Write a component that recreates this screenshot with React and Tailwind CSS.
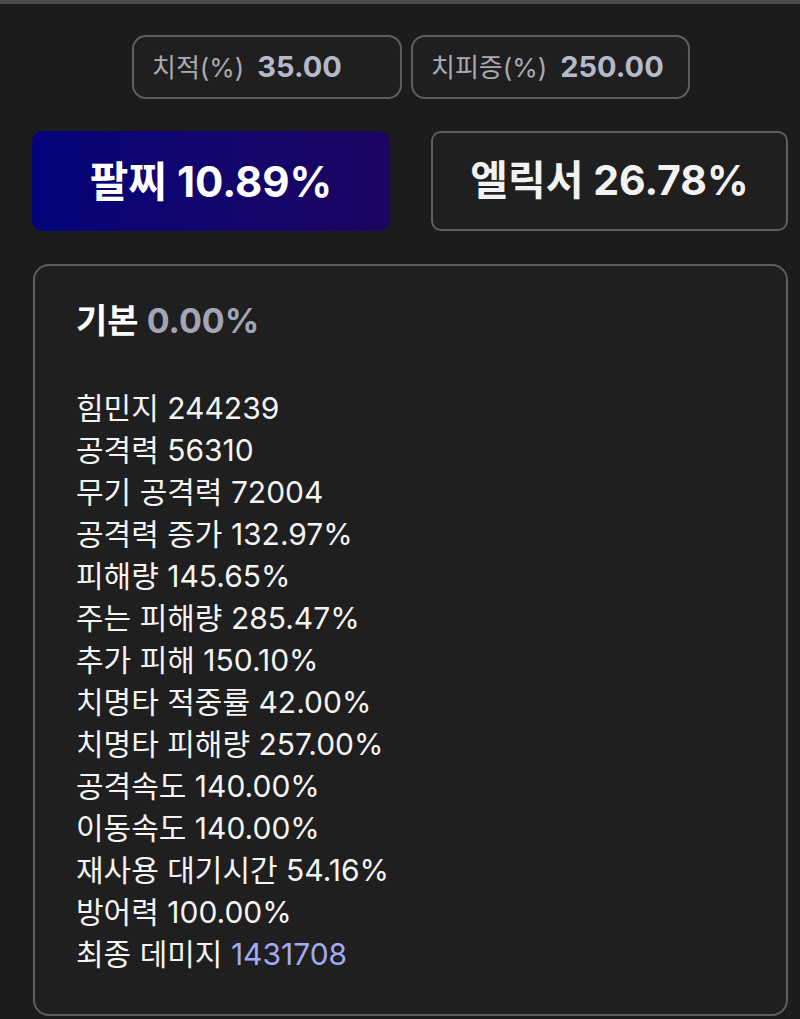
import React from "react"

const font = { fontFamily: 'Inter, "Noto Sans CJK KR", sans-serif' }

const stats = [
  ["힘민지", "244239"],
  ["공격력", "56310"],
  ["무기 공격력", "72004"],
  ["공격력 증가", "132.97%"],
  ["피해량", "145.65%"],
  ["주는 피해량", "285.47%"],
  ["추가 피해", "150.10%"],
  ["치명타 적중률", "42.00%"],
  ["치명타 피해량", "257.00%"],
  ["공격속도", "140.00%"],
  ["이동속도", "140.00%"],
  ["재사용 대기시간", "54.16%"],
  ["방어력", "100.00%"],
]

function InputBox({ label, value, width }) {
  return (
    <div
      className={`flex h-[64px] items-center gap-[13px] rounded-[14px] border-[2.5px] border-[#5e5e60] bg-[#1f1f1f] pl-[18px] ${width}`}
    >
      <span className="text-[26px] text-[#a9aab0]">{label}</span>
      <span className="text-[29px] font-bold text-[#b6b9c9]">{value}</span>
    </div>
  )
}

export default function App() {
  return (
    <div style={font} className="flex h-[1019px] w-[800px] flex-col overflow-hidden bg-[#1c1c1e] text-white">
      <div className="h-[4px] w-full bg-[#4b4b4e]" />

      <div className="mt-[31px] flex gap-[9px] pl-[132px]">
        <InputBox label="치적(%)" value="35.00" width="w-[270px]" />
        <InputBox label="치피증(%)" value="250.00" width="w-[279px]" />
      </div>

      <div className="mt-[32px] flex gap-[41px] pl-[32px]">
        <div className="flex h-[100px] w-[358px] items-center justify-center rounded-[10px] bg-gradient-to-r from-[#03037a] to-[#1b0560]">
          <span className="text-[42px] font-bold">팔찌 10.89%</span>
        </div>
        <div className="flex h-[100px] w-[357px] items-center justify-center rounded-[10px] border-[2.5px] border-[#5e5e60] bg-[#1f1f1f]">
          <span className="text-[41px] font-bold text-[#f2f2f2]">엘릭서 26.78%</span>
        </div>
      </div>

      <div className="ml-[33px] mt-[33px] h-[752px] w-[755px] rounded-[16px] border-[2.5px] border-[#5e5e60] bg-[#1f1f1f] pl-[41px] pt-[32px]">
        <div className="text-[34px] font-bold leading-[46px]">
          기본 <span className="text-[#a2a5b6]">0.00%</span>
        </div>
        <div className="mt-[43px] flex flex-col text-[30px] leading-[42px] text-[#f4f4f4]">
          {stats.map(([k, v]) => (
            <div key={k}>
              {k} {v}
            </div>
          ))}
          <div>
            최종 데미지 <span className="text-[#a3aaf2]">1431708</span>
          </div>
        </div>
      </div>
    </div>
  )
}
